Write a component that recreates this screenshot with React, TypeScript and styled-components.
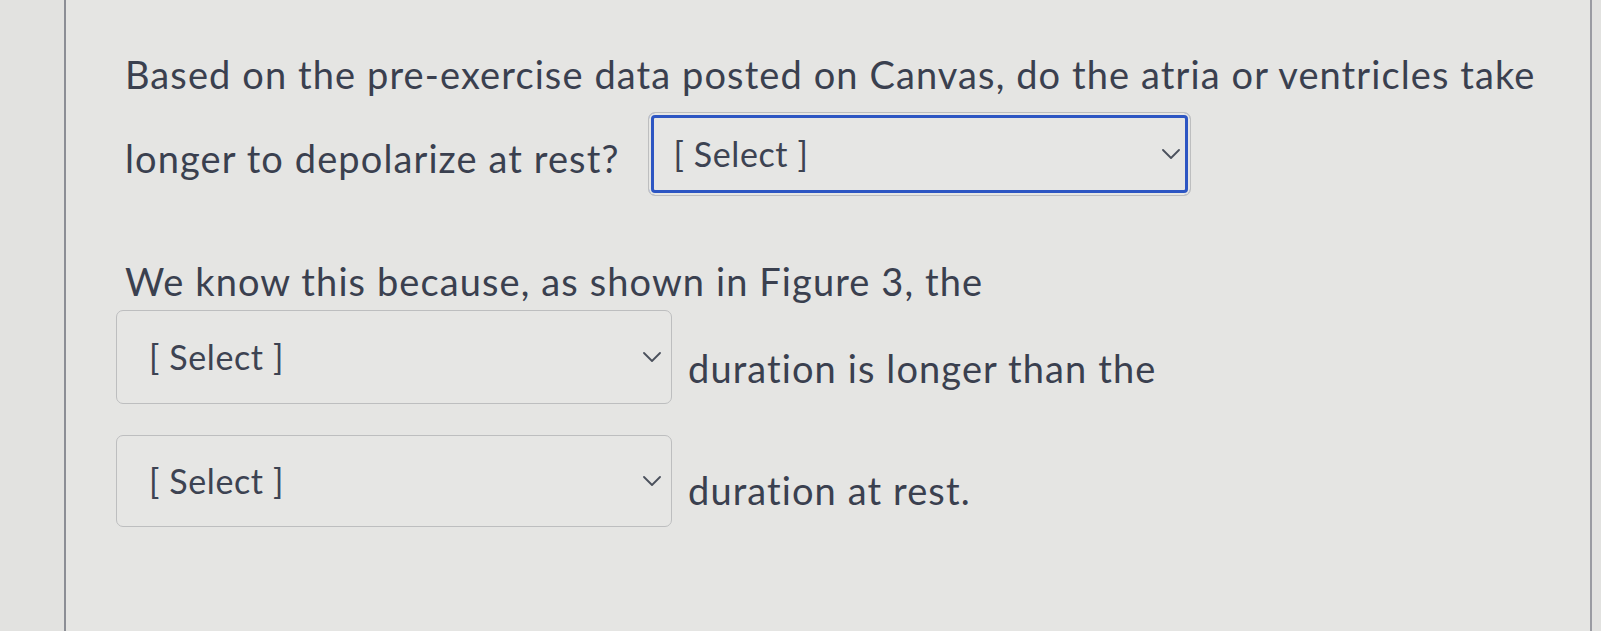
import React from 'react';
import styled, { createGlobalStyle } from 'styled-components';

const GlobalStyle = createGlobalStyle`
  html, body {
    margin: 0;
    padding: 0;
    background: #e2e2e0;
  }
  body {
    font-family: Lato, 'Open Sans', sans-serif;
  }
`;

const Screen = styled.div`
  display: flex;
  height: 631px;
  overflow: hidden;
  background: #e2e2e0;
`;

const Gutter = styled.div`
  flex: 0 0 ${props => props.width}px;
  background: #e2e2e0;
`;

const Panel = styled.div`
  flex: 0 0 1528px;
  box-sizing: border-box;
  border-left: 2px solid #8c8e95;
  border-right: 2px solid #9a9ba2;
  background: #e5e5e3;
  padding: 52px 0 0 59px;
  color: #3a404f;
  font-size: 38px;
  line-height: 44px;
  letter-spacing: 1.1px;
`;

const Line = styled.div`
  white-space: nowrap;
  margin-top: ${props => props.top || 0}px;
`;

const Row = styled.div`
  display: flex;
  align-items: flex-end;
  gap: ${props => props.gap}px;
  margin-top: ${props => props.top}px;
  margin-left: ${props => props.shift || 0}px;
`;

const RowText = styled.span`
  white-space: nowrap;
  margin-bottom: ${props => props.bottom}px;
`;

const SelectBox = styled.div`
  box-sizing: border-box;
  flex: none;
  width: ${props => props.width}px;
  height: ${props => props.height}px;
  display: flex;
  align-items: center;
  justify-content: space-between;
  padding: 0 10px 0 ${props => (props.focused ? 25 : 32)}px;
  border: 1px solid #bdbebf;
  border-radius: 7px;
  background: #e6e6e4;
  color: #3d4352;
  font-size: 34px;
  letter-spacing: 0.6px;
  line-height: 1;
  box-shadow: ${props =>
    props.focused ? 'inset 0 0 0 2px #e6e6e4, inset 0 0 0 5px #2d56c3' : 'none'};
`;

const Chevron = () => (
  <svg width="18" height="10" viewBox="0 0 18 10" fill="none">
    <path d="M1 1l8 8 8-8" stroke="#4a505c" strokeWidth="1.8" strokeLinecap="round" strokeLinejoin="round" />
  </svg>
);

type SelectProps = {
  width: number;
  height: number;
  focused?: boolean;
};

const Select: React.FC<SelectProps> = props => (
  <SelectBox width={props.width} height={props.height} focused={props.focused}>
    <span>[ Select ]</span>
    <Chevron />
  </SelectBox>
);

const App = () => {
  return (
    <>
      <GlobalStyle />
      <Screen>
        <Gutter width={64} />
        <Panel>
          <Line>Based on the pre-exercise data posted on Canvas, do the atria or ventricles take</Line>
          <Row top={16} gap={28}>
            <RowText bottom={16}>longer to depolarize at rest?</RowText>
            <Select width={543} height={84} focused />
          </Row>
          <Line top={63}>We know this because, as shown in Figure 3, the</Line>
          <Row top={7} gap={16} shift={-9}>
            <Select width={556} height={94} />
            <RowText bottom={14}>duration is longer than the</RowText>
          </Row>
          <Row top={31} gap={16} shift={-9}>
            <Select width={556} height={92} />
            <RowText bottom={15}>duration at rest.</RowText>
          </Row>
        </Panel>
        <Gutter width={9} />
      </Screen>
    </>
  );
};

export default App;
